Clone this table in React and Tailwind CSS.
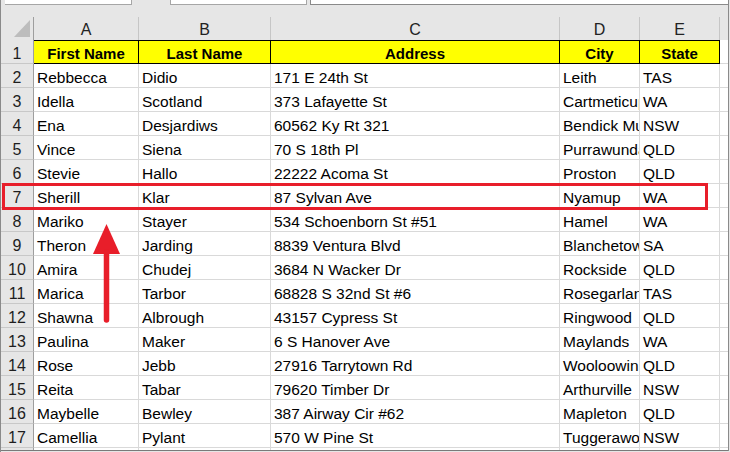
import React from "react";

const cols = [
  { key: "A", w: "w-[105px]" },
  { key: "B", w: "w-[132px]" },
  { key: "C", w: "w-[289px]" },
  { key: "D", w: "w-[80px]" },
  { key: "E", w: "w-[80px]" },
];

const rows = [
  ["Rebbecca", "Didio", "171 E 24th St", "Leith", "TAS"],
  ["Idella", "Scotland", "373 Lafayette St", "Cartmeticup", "WA"],
  ["Ena", "Desjardiws", "60562 Ky Rt 321", "Bendick Murrell", "NSW"],
  ["Vince", "Siena", "70 S 18th Pl", "Purrawunda", "QLD"],
  ["Stevie", "Hallo", "22222 Acoma St", "Proston", "QLD"],
  ["Sherill", "Klar", "87 Sylvan Ave", "Nyamup", "WA"],
  ["Mariko", "Stayer", "534 Schoenborn St #51", "Hamel", "WA"],
  ["Theron", "Jarding", "8839 Ventura Blvd", "Blanchetown", "SA"],
  ["Amira", "Chudej", "3684 N Wacker Dr", "Rockside", "QLD"],
  ["Marica", "Tarbor", "68828 S 32nd St #6", "Rosegarland", "TAS"],
  ["Shawna", "Albrough", "43157 Cypress St", "Ringwood", "QLD"],
  ["Paulina", "Maker", "6 S Hanover Ave", "Maylands", "WA"],
  ["Rose", "Jebb", "27916 Tarrytown Rd", "Wooloowin", "QLD"],
  ["Reita", "Tabar", "79620 Timber Dr", "Arthurville", "NSW"],
  ["Maybelle", "Bewley", "387 Airway Cir #62", "Mapleton", "QLD"],
  ["Camellia", "Pylant", "570 W Pine St", "Tuggerawong", "NSW"],
];

const titles = ["First Name", "Last Name", "Address", "City", "State"];

function RowHead({ n }) {
  return (
    <div className="w-[33px] h-full shrink-0 bg-[#e6e6e6] border-r border-r-[#9e9e9e] border-b border-b-[#c8c8c8] flex items-center justify-center pt-[5px] text-[16px] text-[#1e1e1e]">
      {n}
    </div>
  );
}

export default function App() {
  return (
    <div
      className="relative w-[730px] h-[452px] overflow-hidden bg-[#e6e6e6] border-l border-l-[#8a8a8a]"
      style={{ fontFamily: "'Liberation Sans', Arial, sans-serif" }}
    >
      {/* top fields */}
      <div className="flex h-[5px]">
        <div className="ml-[4px] w-[127px] bg-white border-b border-r border-[#a6a6a6]" />
        <div className="ml-[38px] w-[137px] bg-white border-b border-l border-r border-[#a6a6a6]" />
        <div className="ml-[3px] w-[419px] bg-white border-b border-l border-r border-[#8a8a8a]" />
      </div>
      <div className="h-[12px] border-r border-r-[#8a8a8a] w-[728px]" />

      <div className="w-[728px] border-r border-r-[#8a8a8a]">
        {/* column letters */}
        <div className="flex h-[23px]">
          <div className="w-[33px] shrink-0 border-r border-r-[#9e9e9e] relative">
            <svg className="absolute left-[13px] top-[3px]" width="17" height="17" viewBox="0 0 17 17">
              <polygon points="16,0 16,17 0,17" fill="#bdbdbd" />
            </svg>
          </div>
          {cols.map((c) => (
            <div
              key={c.key}
              className={`${c.w} shrink-0 border-r border-r-[#c6c6c6] flex items-center justify-center pt-[2px] text-[16px] text-[#222]`}
            >
              {c.key}
            </div>
          ))}
          <div className="flex-1" />
        </div>

        {/* row 1 */}
        <div className="flex h-[24px]">
          <RowHead n={1} />
          {cols.map((c, i) => (
            <div
              key={c.key}
              className={`${c.w} shrink-0 bg-[#ffff00] border-t border-b border-r border-black flex items-center justify-center pt-[4px] font-bold text-[15px] text-black`}
            >
              {titles[i]}
            </div>
          ))}
          <div className="flex-1 bg-white border-b border-b-[#d9d9d9]" />
        </div>

        {rows.map((r, ri) => (
          <div key={ri} className="flex h-[24px]">
            <RowHead n={ri + 2} />
            {cols.map((c, i) => (
              <div
                key={c.key}
                className={`${c.w} shrink-0 bg-white border-b border-r border-[#d9d9d9] flex items-center pl-[3px] pt-[5px] text-[15.5px] text-black whitespace-nowrap overflow-hidden`}
              >
                {r[i]}
              </div>
            ))}
            <div className="flex-1 bg-white border-b border-b-[#d9d9d9]" />
          </div>
        ))}

        <div className="flex h-[2px]">
          <div className="w-[33px] shrink-0 bg-[#e6e6e6] border-r border-r-[#9e9e9e]" />
          {cols.map((c) => (
            <div key={c.key} className={`${c.w} shrink-0 bg-white border-r border-r-[#d9d9d9]`} />
          ))}
          <div className="flex-1 bg-white" />
        </div>
        <div className="h-[1px] bg-[#7a7a7a]" />
      </div>

      {/* annotation: red box around row 7 */}
      <div className="absolute left-[1px] top-[183px] w-[706px] h-[27px] border-[3px] border-[#e81e2a]" />

      {/* annotation: arrow */}
      <svg className="absolute left-[88px] top-[220px]" width="36" height="106" viewBox="0 0 36 106">
        <polygon points="17.5,4 4,34 31,34" fill="#e81e2a" />
        <line x1="17.5" y1="32" x2="17.5" y2="100" stroke="#e81e2a" strokeWidth="5.5" strokeLinecap="round" />
      </svg>
    </div>
  );
}
